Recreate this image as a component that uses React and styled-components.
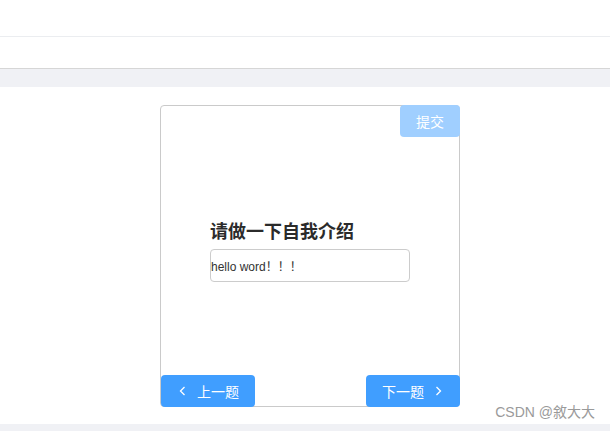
import styled, { createGlobalStyle } from "styled-components"

const GlobalStyle = createGlobalStyle`
  html, body {
    margin: 0;
    padding: 0;
    background: #ffffff;
    font-family: "Liberation Sans", "Noto Sans CJK SC", sans-serif;
  }
`

const Page = styled.div`
  position: relative;
  width: 610px;
  height: 431px;
  overflow: hidden;
  display: flex;
  flex-direction: column;
`

const Header = styled.div`
  height: 36px;
  border-bottom: 1px solid #ebedf0;
  background: #fff;
`

const SubBar = styled.div`
  height: 31px;
  border-bottom: 1px solid #d6d6d6;
  background: #fff;
`

const GrayStrip = styled.div`
  height: ${p => p.$h}px;
  background: #f0f1f5;
  flex: ${p => (p.$grow ? 1 : "none")};
`

const Main = styled.div`
  height: 337px;
  display: flex;
  justify-content: center;
  padding: 18px 0 0 10px;
  box-sizing: border-box;
  background: #fff;
`

const Card = styled.div`
  width: 300px;
  height: 302px;
  box-sizing: border-box;
  border: 1px solid #cacaca;
  border-radius: 4px;
  display: flex;
  flex-direction: column;
`

const TopRow = styled.div`
  display: flex;
  justify-content: flex-end;
  margin: -1px -1px 0 0;
`

const Button = styled.button`
  height: 32px;
  width: ${p => p.$w}px;
  border: none;
  border-radius: 4px;
  background: ${p => (p.$disabled ? "#a0cfff" : "#409eff")};
  color: #fff;
  font-size: 14px;
  font-family: "Noto Sans CJK SC", sans-serif;
  display: flex;
  align-items: center;
  justify-content: center;
  gap: 8px;
  padding: 0;
  cursor: pointer;
`

const Body = styled.div`
  flex: 1;
  display: flex;
  flex-direction: column;
  justify-content: center;
  padding: 0 0 13px 49px;
`

const Question = styled.div`
  font-family: "Noto Sans CJK SC", sans-serif;
  font-weight: 700;
  font-size: 18px;
  line-height: 24px;
  color: #2b2b2b;
  margin-bottom: 7px;
`

const Answer = styled.div`
  width: 200px;
  height: 33px;
  box-sizing: border-box;
  border: 1px solid #cccccc;
  border-radius: 4px;
  display: flex;
  align-items: center;
  font-family: "Liberation Sans", "Noto Sans CJK SC", sans-serif;
  font-size: 12px;
  color: #333;
`

const BottomRow = styled.div`
  display: flex;
  justify-content: space-between;
  margin: 0 -1px -1px 0;
`

const Chevron = ({ dir }) => (
  <svg width="12" height="12" viewBox="0 0 12 12" fill="none" stroke="#fff" strokeWidth="1.3">
    {dir === "left" ? <path d="M7.5 2 L3.5 6 L7.5 10" /> : <path d="M4.5 2 L8.5 6 L4.5 10" />}
  </svg>
)

const Watermark = styled.div`
  position: absolute;
  right: 15px;
  bottom: 10px;
  font-family: "Liberation Sans", "Noto Sans CJK SC", sans-serif;
  font-size: 14px;
  color: #9a9a9a;
`

export default function App() {
  return (
    <Page>
      <GlobalStyle />
      <Header />
      <SubBar />
      <GrayStrip $h={18} />
      <Main>
        <Card>
          <TopRow>
            <Button $w={60} $disabled>提交</Button>
          </TopRow>
          <Body>
            <Question>请做一下自我介绍</Question>
            <Answer>hello word！！！</Answer>
          </Body>
          <BottomRow>
            <Button $w={94}><Chevron dir="left" />上一题</Button>
            <Button $w={94}>下一题<Chevron dir="right" /></Button>
          </BottomRow>
        </Card>
      </Main>
      <GrayStrip $grow />
      <Watermark>CSDN @敘大大</Watermark>
    </Page>
  )
}
